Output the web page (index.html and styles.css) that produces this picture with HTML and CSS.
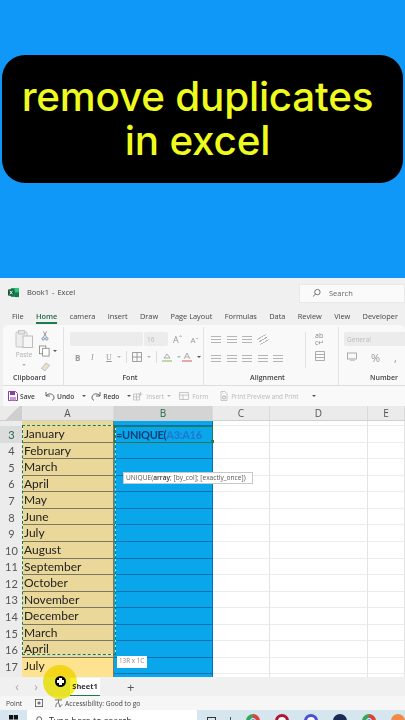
FILE: index.html
```html
<!DOCTYPE html>
<html lang="en">
<head>
<meta charset="utf-8">
<title>remove duplicates in excel</title>
<link rel="stylesheet" href="styles.css">
</head>
<body>
<div class="page">
  <section class="hero">
    <h1 class="banner">remove duplicates<br>in excel</h1>
  </section>

  <section class="excel">
    <header class="titlebar">
      <svg class="xl-logo" viewBox="0 0 12 12"><rect x="3" y="1" width="9" height="10" rx="1" fill="#21a366"/><rect x="7.5" y="1" width="4.5" height="5" fill="#33c481"/><rect x="7.5" y="6" width="4.5" height="5" fill="#107c41"/><rect y="2.5" width="7" height="7" rx="1" fill="#185c37"/><path d="M2 4l3 4M5 4L2 8" stroke="#fff" stroke-width="1"/></svg>
      <span class="doc-title">Book1 - Excel</span>
      <div class="searchbox">
        <svg class="search-icon" viewBox="0 0 10 10"><circle cx="6" cy="4" r="3" fill="none" stroke="#444" stroke-width=".8"/><path d="M4 6.2L1 9" stroke="#444" stroke-width=".8"/></svg>
        <span>Search</span>
      </div>
    </header>

    <nav class="tabs">
      <span>File</span>
      <span class="tab-active">Home</span>
      <span>camera</span>
      <span>Insert</span>
      <span>Draw</span>
      <span>Page Layout</span>
      <span>Formulas</span>
      <span>Data</span>
      <span>Review</span>
      <span>View</span>
      <span>Developer</span>
    </nav>

    <div class="ribbon">
      <div class="group g-clip">
        <div class="group-body clip-body">
          <div class="paste">
            <svg class="paste-icon" viewBox="0 0 18 18"><rect x="1" y="2" width="11" height="15" rx="1" fill="#eee" stroke="#c6c6c6"/><rect x="3.5" y=".5" width="6" height="3.5" fill="#e4e4e4" stroke="#c6c6c6"/><rect x="8" y="6" width="9.5" height="11.5" fill="#f6f6f6" stroke="#bdbdbd"/></svg>
            <span>Paste</span>
            <i class="caret"></i>
          </div>
          <div class="clip-tools">
            <svg class="tool-cut" viewBox="0 0 10 12"><path d="M3 .5l4 7.5M7 .5L3 8" stroke="#666" fill="none" stroke-width=".8"/><circle cx="2.8" cy="9.8" r="1.6" fill="none" stroke="#5b7fa5"/><circle cx="7.2" cy="9.8" r="1.6" fill="none" stroke="#5b7fa5"/></svg>
            <div class="tool-copy">
              <svg viewBox="0 0 12 12"><rect x=".5" y=".5" width="7" height="8.5" fill="#fff" stroke="#777" stroke-width=".8"/><rect x="4" y="3" width="7" height="8.5" fill="#fff" stroke="#777" stroke-width=".8"/></svg>
              <i class="caret caret-dark"></i>
            </div>
            <svg class="tool-brush" viewBox="0 0 12 12"><path d="M1.5 9l5-6 4 2.500-5 6z" fill="#e8e2cc" stroke="#aaa" stroke-width=".7"/></svg>
          </div>
        </div>
        <div class="group-label">Clipboard</div>
      </div>

      <div class="group g-font">
        <div class="group-body font-body">
          <div class="font-row">
            <div class="combo combo-font"></div>
            <div class="combo combo-size">16</div>
            <span class="big-a">A&#710;</span>
            <span class="big-a small-a">A&#711;</span>
          </div>
          <div class="font-row font-row-b">
            <b class="fb">B</b><em class="fi">I</em><u class="fu">U</u><i class="caret"></i>
            <i class="vsep"></i>
            <svg viewBox="0 0 10 10"><path d="M.5.5h9v9h-9zM5 .5v9M.5 5h9" fill="none" stroke="#888" stroke-width=".8"/></svg><i class="caret"></i>
            <i class="vsep"></i>
            <svg viewBox="0 0 10 10"><path d="M2 6l3-4 3 4z" fill="none" stroke="#999" stroke-width=".8"/><rect y="8" width="10" height="2" fill="#bfd8a8"/></svg><i class="caret"></i>
            <svg viewBox="0 0 10 10"><path d="M2 7l3-6 3 6M3.200 5h3.600" fill="none" stroke="#999" stroke-width=".8"/><rect y="8" width="10" height="2" fill="#e3a9a9"/></svg><i class="caret caret-dark"></i>
          </div>
        </div>
        <div class="group-label">Font</div>
      </div>

      <div class="group g-align">
        <div class="group-body align-body">
          <div class="align-grid">
            <i class="lines"></i><i class="lines"></i><i class="lines"></i><i class="lines ang"></i><i class="lines lines-in"></i>
            <i class="lines"></i><i class="lines"></i><i class="lines"></i><i class="lines"></i><i class="lines"></i>
          </div>
          <div class="wrap-tools">
            <span class="wrap-ab">ab<br>c&#8629;</span>
            <svg viewBox="0 0 10 10"><path d="M.5.5h9v9h-9zM.5 3.500h9M.5 6.500h9" fill="none" stroke="#999" stroke-width=".8"/></svg>
          </div>
        </div>
        <div class="group-label">Alignment</div>
      </div>

      <div class="group g-num">
        <div class="group-body num-body">
          <div class="combo combo-num">General</div>
          <div class="num-row">
            <svg viewBox="0 0 10 10"><rect x=".5" y="1" width="9" height="6" fill="none" stroke="#999" stroke-width=".8"/><rect x="3" y="6" width="5" height="3" fill="#ccc"/></svg>
            <span class="pct">%</span><span class="comma">,</span>
          </div>
        </div>
        <div class="group-label">Number</div>
      </div>
    </div>

    <div class="qat">
      <svg class="qat-save" viewBox="0 0 10 10"><path d="M.5.5h7l2 2v7h-9z" fill="#fff" stroke="#8a3f9e"/><rect x="2" y="1" width="5" height="3" fill="#8a3f9e"/><rect x="2" y="6" width="6" height="3.500" fill="#c79ad3"/></svg>
      <span class="qat-on qat-save-t">Save</span>
      <svg class="qat-arrow" viewBox="0 0 10 10"><path d="M1 1v4h4M1 5c2-3 7-3 8 1 .3 1.500-1 3-2 3.500" fill="none" stroke="#555" stroke-width=".9"/></svg>
      <span class="qat-on">Undo</span><i class="caret caret-dark"></i>
      <svg class="qat-arrow" viewBox="0 0 10 10"><path d="M9 1v4H5M9 5C7 2 2 2 1 6c-.3 1.500 1 3 2 3.500" fill="none" stroke="#555" stroke-width=".9"/></svg>
      <span class="qat-on">Redo</span><i class="caret caret-dark caret-redo"></i>
      <svg class="qat-ic" viewBox="0 0 10 10"><path d="M.5 3h6v6h-6zM.5 6h6M3.500 3v6M7.500 1v4M5.500 3h4" fill="none" stroke="#bbb" stroke-width=".8"/></svg>
      <span class="qat-off">Insert</span><i class="caret"></i>
      <svg class="qat-ic qat-form" viewBox="0 0 10 10"><path d="M.5 1.500h9v7h-9zM.5 4h9M4 4v4.500" fill="none" stroke="#bbb" stroke-width=".8"/></svg>
      <span class="qat-off">Form</span>
      <svg class="qat-ic qat-print" viewBox="0 0 10 10"><path d="M2 .5h4l2 2v7H2z" fill="none" stroke="#bbb" stroke-width=".8"/><circle cx="5" cy="6.500" r="1.500" fill="none" stroke="#999" stroke-width=".8"/></svg>
      <span class="qat-off qat-print-t">Print Preview and Print</span>
      <i class="caret caret-dark caret-last"></i>
    </div>

    <div class="sheet">
      <div class="corner"></div>
      <div class="ch ch-a">A</div>
      <div class="ch ch-b">B</div>
      <div class="ch">C</div>
      <div class="ch">D</div>
      <div class="ch">E</div>
    </div>

    <div class="grid">
      <div class="rh rh-cut"></div><div class="a a-cut"></div><div class="b b-cut"></div><div class="c"></div><div class="c"></div><div class="c"></div>
      <div class="rh rh-sel">3</div><div class="a">January</div><div class="b b-active">=UNIQUE(<span class="ref">A3:A16</span></div><div class="c"></div><div class="c"></div><div class="c"></div>
      <div class="rh">4</div><div class="a">February</div><div class="b"></div><div class="c"></div><div class="c"></div><div class="c"></div>
      <div class="rh">5</div><div class="a">March</div><div class="b"></div><div class="c"></div><div class="c"></div><div class="c"></div>
      <div class="rh">6</div><div class="a">April</div><div class="b"></div><div class="c"></div><div class="c"></div><div class="c"></div>
      <div class="rh">7</div><div class="a">May</div><div class="b"></div><div class="c"></div><div class="c"></div><div class="c"></div>
      <div class="rh">8</div><div class="a">June</div><div class="b"></div><div class="c"></div><div class="c"></div><div class="c"></div>
      <div class="rh">9</div><div class="a">July</div><div class="b"></div><div class="c"></div><div class="c"></div><div class="c"></div>
      <div class="rh">10</div><div class="a">August</div><div class="b"></div><div class="c"></div><div class="c"></div><div class="c"></div>
      <div class="rh">11</div><div class="a">September</div><div class="b"></div><div class="c"></div><div class="c"></div><div class="c"></div>
      <div class="rh">12</div><div class="a">October</div><div class="b"></div><div class="c"></div><div class="c"></div><div class="c"></div>
      <div class="rh">13</div><div class="a">November</div><div class="b"></div><div class="c"></div><div class="c"></div><div class="c"></div>
      <div class="rh">14</div><div class="a">December</div><div class="b"></div><div class="c"></div><div class="c"></div><div class="c"></div>
      <div class="rh">15</div><div class="a">March</div><div class="b"></div><div class="c"></div><div class="c"></div><div class="c"></div>
      <div class="rh">16</div><div class="a a-last">April</div><div class="b"></div><div class="c"></div><div class="c"></div><div class="c"></div>
      <div class="rh">17</div><div class="a a-july">July</div><div class="b"></div><div class="c"></div><div class="c"></div><div class="c"></div>
      <div class="rh"></div><div class="a a-july"></div><div class="b"></div><div class="c"></div><div class="c"></div><div class="c"></div>
      <div class="marquee"></div>
      <div class="fill-handle"></div>
      <div class="hint hint-fn">UNIQUE(<b>array</b>; [by_col]; [exactly_once])</div>
      <div class="hint hint-size">13R x 1C</div>
    </div>

    <div class="sheetbar">
      <span class="nav">&#8249;</span>
      <span class="nav">&#8250;</span>
      <span class="sheet-tab">Sheet1</span>
      <span class="add">+</span>
    </div>

    <div class="statusbar">
      <span class="mode">Point</span>
      <svg class="st-macro" viewBox="0 0 10 10"><rect x=".5" y=".5" width="9" height="9" fill="none" stroke="#555"/><circle cx="5" cy="5" r="2" fill="#777"/></svg>
      <svg class="st-acc" viewBox="0 0 10 10"><path d="M1 1h8M5 1v3M2 9c0-3 1-5 3-5M5 4l2 5M9 6L6 9" fill="none" stroke="#555" stroke-width=".9"/></svg>
      <span>Accessibility: Good to go</span>
    </div>

    <div class="taskbar">
      <svg class="win" viewBox="0 0 10 10"><path d="M0 0h4.600v4.600H0zM5.400 0H10v4.600H5.400zM0 5.400h4.600V10H0zM5.400 5.400H10V10H5.400z" fill="#111"/></svg>
      <div class="task-search">
        <svg viewBox="0 0 10 10"><circle cx="4" cy="4" r="3" fill="none" stroke="#333"/></svg>
        <span>Type here to search</span>
      </div>
      <div class="task-icons">
        <i class="ti ti-view"></i>
        <i class="ti ti-line"></i>
        <i class="app chrome"></i>
        <i class="app red"></i>
        <i class="app indigo"></i>
        <i class="app navy"></i>
        <i class="app chrome"></i>
        <i class="app orange"></i>
      </div>
    </div>

    <div class="pointer"></div>
    <span class="cross"></span>
  </section>
</div>
</body>
</html>
```

FILE: styles.css
```css
* { box-sizing: border-box; }
html, body { margin: 0; padding: 0; }
body { width: 405px; height: 720px; overflow: hidden; background: #fff; font-family: "Open Sans", "Noto Sans", sans-serif; }
.page { width: 405px; height: 720px; display: flex; flex-direction: column; overflow: hidden; }

.hero { height: 278px; flex: none; background: #0f98f7; padding: 55px 2px 0; }
.banner { margin: 0; height: 128px; background: #000; border-radius: 23px; color: #eefb1c; font-family: Inter, Roboto, sans-serif; font-weight: 500; font-size: 40.4px; line-height: 44px; text-align: center; padding: 20px 10px 0 0; letter-spacing: -.2px; white-space: nowrap; }

.excel { position: relative; flex: 1; display: flex; flex-direction: column; background: #f0f0f0; color: #333; filter: blur(.35px); overflow: hidden; }

.titlebar { height: 28px; flex: none; display: flex; align-items: center; padding-left: 8px; font-size: 7.5px; color: #444; }
.xl-logo { width: 11px; height: 11px; }
.doc-title { margin-left: 8px; word-spacing: 1px; }
.searchbox { margin-left: auto; width: 106px; height: 19px; margin-top: 2px; background: #fafafa; border: 1px solid #e8e8e8; display: flex; align-items: center; padding-left: 12px; gap: 8px; color: #666; }
.search-icon { width: 9px; height: 10px; }

.tabs { height: 19px; flex: none; display: flex; align-items: center; font-size: 7.4px; padding-left: 12px; color: #444; }
.tabs span { margin-right: 12.3px; white-space: nowrap; }
.tab-active { position: relative; font-weight: 600; color: #1f6b46; }
.tab-active::after { content: ""; position: absolute; left: 0; right: 0; bottom: -3px; height: 1.5px; background: #1f7a4d; }

.ribbon { height: 60px; flex: none; display: flex; background: #f9f9f9; border-radius: 5px 5px 0 0; margin-left: 3px; }
.group { flex: none; display: flex; flex-direction: column; border-right: 1px solid #e2e2e2; margin: 2px 0 0; }
.group-body { height: 44px; }
.group-label { font-size: 7px; text-align: center; color: #444; font-weight: 600; line-height: 14px; padding-right: 7px; }
.g-clip { width: 61px; }
.g-font { width: 140px; }
.g-align { width: 135px; }
.g-num { width: 90px; border-right: 0; }
.g-num .group-label { padding-right: 0; }

.clip-body { display: flex; padding: 3px 0 0 11px; gap: 5px; }
.paste { width: 20px; display: flex; flex-direction: column; align-items: center; font-size: 6.5px; line-height: 8px; color: #b0b0b0; }
.paste-icon { width: 18px; height: 18px; margin-bottom: 3px; }
.paste .caret { margin-top: 5px; }
.clip-tools { display: flex; flex-direction: column; gap: 3px; }
.tool-cut { width: 8px; height: 12px; margin-left: 2px; }
.tool-copy { display: flex; align-items: center; gap: 3px; height: 12px; }
.tool-copy svg { width: 11px; height: 12px; }
.tool-brush { width: 11px; height: 12px; margin-left: 1px; }
.caret { display: inline-block; flex: none; width: 0; height: 0; border-left: 2px solid transparent; border-right: 2px solid transparent; border-top: 2px solid #b5b5b5; }
.caret-dark { border-top-color: #555; }

.font-body { padding: 5px 0 0 6px; }
.font-row { display: flex; align-items: center; gap: 1px; height: 14px; }
.combo { height: 14px; background: #ececec; border-radius: 2px; font-size: 6.5px; color: #bbb; display: flex; align-items: center; padding-left: 3px; }
.combo-font { width: 73px; }
.combo-size { width: 24px; }
.big-a { font-size: 9px; color: #999; margin-left: 4px; }
.small-a { font-size: 8px; margin-left: 7px; }
.font-row-b { margin-top: 4px; padding-left: 5px; font-size: 8px; color: #999; font-family: "Liberation Serif", serif; }
.font-row-b svg { width: 10px; height: 10px; margin-right: 4px; }
.fb { font-family: "Open Sans", sans-serif; width: 6px; margin-right: 9px; }
.fi { width: 4px; margin-right: 10px; }
.fu { width: 6px; margin-right: 4px; }
.vsep { width: 1px; height: 12px; background: #dcdcdc; margin: 0 4px; flex: none; }

.align-body { display: flex; padding: 5px 0 0 7px; gap: 9px; }
.align-grid { display: grid; grid-template-columns: repeat(5, 10px); grid-auto-rows: 14px; column-gap: 5.5px; row-gap: 5px; width: 95px; border-right: 1px solid #e2e2e2; height: 36px; }
.lines { display: block; height: 7px; margin-top: 4px; background: repeating-linear-gradient(#b5b5b5 0 1px, transparent 1px 3px); }
.ang { transform: rotate(-30deg); }
.lines-in { margin-left: 11px; }
.wrap-tools { display: flex; flex-direction: column; gap: 5px; }
.wrap-ab { font-size: 7px; line-height: 7px; color: #888; height: 14px; }
.wrap-tools svg { width: 10px; height: 10px; }

.num-body { padding: 5px 0 0 5px; }
.combo-num { width: 85px; }
.num-row { display: flex; align-items: center; gap: 14px; margin-top: 4px; padding-left: 3px; height: 14px; color: #999; font-size: 11px; }
.num-row svg { width: 10px; height: 10px; }

.qat { height: 21px; flex: none; display: flex; align-items: center; background: #f9f9f9; border-top: 1px solid #dedede; margin-left: 3px; padding-left: 5px; font-size: 6.6px; white-space: nowrap; }
.qat-save { width: 10px; height: 10px; margin-right: 2px; flex: none; }
.qat-on { font-weight: 600; color: #444; }
.qat-save-t { width: 14px; margin-right: 11px; }
.qat-arrow { width: 10px; height: 10px; margin-right: 2px; flex: none; }
.qat .caret-dark { margin: 0 5px 0 8px; }
.qat .caret-redo { margin: 0 2px 0 8px; }
.qat-ic { width: 10px; height: 10px; margin-right: 3px; flex: none; }
.qat-off { color: #b8b8b8; }
.qat-off + .caret { margin-left: 3px; }
.qat-form { margin-left: 8px; }
.qat-print { margin-left: 11px; margin-right: 2px; }
.qat-print-t { font-size: 6.3px; }
.qat .caret-last { margin-left: 13px; }

.sheet { height: 15px; flex: none; display: grid; grid-template-columns: 22px 92px 99px 57px 98px 37px; background: #ebebeb; font-size: 10px; color: #555; border-bottom: 1px solid #d0d0d0; font-family: "Open Sans", sans-serif; }
.ch { display: flex; align-items: center; justify-content: center; border-right: 1px solid #dadada; }
.ch-b { background: #d4d4d4; color: #1f6b46; }
.ch-a { background: #e6e6e6; }
.corner { background: linear-gradient(135deg, transparent 55%, #cfcfcf 55%); }

.grid { position: relative; flex: none; height: 256px; display: grid; grid-template-columns: 22px 92px 99px 57px 98px 37px; grid-template-rows: 5px repeat(16, 16.57px); background: #fff; overflow: hidden; font-family: Lato, "Open Sans", sans-serif; font-size: 12px; color: #222; }
.rh { background: #ececec; display: flex; align-items: center; justify-content: center; font-size: 11px; color: #555; padding-left: 1px; }
.rh-sel { background: #dcdcdc; color: #1f6b46; }
.a { background: #ead79a; border-bottom: 1px solid #7a7660; border-right: 1px solid #7a7660; padding-left: 2px; line-height: 16px; }
.a-july { background: #fde38f; border-bottom: 0; }
.b { background: #0aa6ec; border-bottom: 1.5px solid #0670ab; border-right: 1px solid #0670ab; }
.c { border-bottom: 1px solid #ececec; border-right: 1px solid #e4e4e4; }
.b-active { border: 1px solid #1f7a4d; line-height: 15px; padding-left: 1px; color: #0a3f73; font-size: 11px; font-weight: 700; letter-spacing: -.3px; white-space: nowrap; overflow: hidden; }
.ref { color: #1f78cc; font-weight: 700; }
.marquee { position: absolute; left: 22px; top: 4px; width: 94px; height: 230px; border: 1.5px solid rgba(235, 250, 240, .85); outline: 1.5px dashed #1b7a4b; outline-offset: -1.5px; }
.fill-handle { position: absolute; left: 211px; top: 19px; width: 3px; height: 3px; background: #1f7a4d; }
.hint { position: absolute; background: #fff; border: 1px solid #c8c8c8; font-family: "Open Sans", sans-serif; font-size: 6.6px; color: #555; white-space: nowrap; line-height: 10px; padding: 0 2px; }
.hint b { font-weight: 600; color: #333; }
.hint-fn { left: 123px; top: 51px; height: 12px; width: 130px; }
.hint-size { left: 117px; top: 235px; height: 12px; width: 30px; border: 0; color: #888; font-size: 6.3px; }

.sheetbar { height: 19px; flex: none; display: flex; align-items: center; background: #f0f0f0; font-size: 7.5px; color: #333; }
.nav { width: 20px; text-align: center; font-size: 12px; color: #aaa; margin-left: 7px; margin-right: -7px; }
.nav + .nav { margin-right: 0; margin-left: 6px; }
.sheet-tab { margin-left: 24px; height: 18px; width: 30px; background: #fff; font-weight: 700; text-align: center; line-height: 17px; border-bottom: 1px solid #1f7a4d; }
.add { margin-left: 27px; font-size: 13px; color: #555; }

.statusbar { height: 14px; flex: none; display: flex; align-items: center; background: #f6f6f6; font-size: 6.7px; color: #444; padding-left: 6px; }
.mode { width: 29px; }
.st-macro { width: 8px; height: 8px; margin-right: 11px; }
.st-acc { width: 9px; height: 9px; margin-right: 2px; }

.taskbar { height: 10px; flex: none; display: flex; background: #d6e6ef; overflow: hidden; }
.win { width: 9px; height: 9px; margin: 5px 0 0 9px; flex: none; }
.task-search { width: 170px; margin-left: 9px; height: 20px; background: #fff; display: flex; align-items: flex-start; gap: 5px; padding: 6px 0 0 9px; font-size: 9px; line-height: 10px; color: #333; flex: none; }
.task-search svg { width: 8px; height: 8px; flex: none; }
.task-icons { position: relative; display: flex; padding: 4px 0 0 10px; gap: 15px; flex: none; }
.ti { display: block; width: 9px; height: 8px; flex: none; }
.ti-view { border: 1px solid #333; margin-top: 3px; }
.ti-line { width: 1px; background: #555; margin: 3px 0 0 -1px; }
.app { display: block; width: 14px; height: 14px; border-radius: 50%; flex: none; }
.chrome { background: conic-gradient(#d9443a 0 33%, #f2c230 33% 66%, #3ba55d 66%); position: relative; }
.chrome::after { content: ""; position: absolute; inset: 4px; border-radius: 50%; background: #4285f4; border: 1px solid #fff; }
.red { border: 3px solid #b01535; background: #fff; }
.indigo { border: 3px solid #4a4fd6; background: #fff; }
.navy { background: #1a2a55; }
.orange { background: #f08a48; }

.pointer { position: absolute; left: 43px; top: 387px; width: 34px; height: 34px; border-radius: 50%; background: #f6f02c; mix-blend-mode: multiply; }
.cross { position: absolute; left: 55px; top: 398px; display: block; width: 11px; height: 11px; background: #000; border-radius: 50%; }
.cross::before { content: ""; position: absolute; left: 4px; top: 2px; width: 3px; height: 7px; background: #fff; }
.cross::after { content: ""; position: absolute; left: 2px; top: 4px; width: 7px; height: 3px; background: #fff; }
```
